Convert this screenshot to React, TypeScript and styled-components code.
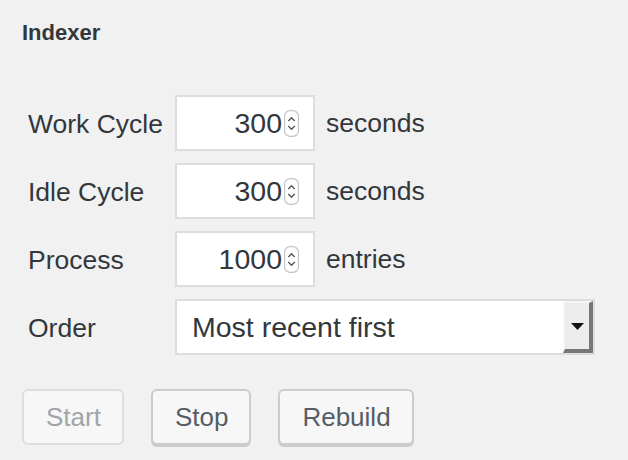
import React from 'react';
import styled, { createGlobalStyle } from 'styled-components';

const GlobalStyle = createGlobalStyle`
  html, body {
    margin: 0;
    padding: 0;
    background: #f1f1f1;
  }
  body {
    font-family: 'Liberation Sans', Arial, sans-serif;
    color: #32373c;
  }
`;

const Page = styled.div`
  width: 628px;
  height: 460px;
  box-sizing: border-box;
  padding: 20px 22px;
  background: #f1f1f1;
`;

const Title = styled.h2`
  margin: 0;
  font-size: 22px;
  line-height: 26px;
  font-weight: bold;
  color: #32373c;
`;

const Form = styled.div`
  display: grid;
  grid-template-columns: 147px auto;
  row-gap: 12px;
  margin-top: 49px;
  padding-left: 6px;
`;

const Label = styled.label`
  align-self: center;
  padding-top: 3px;
  font-size: 26.5px;
  color: #32373c;
`;

const Control = styled.div`
  display: flex;
  align-items: center;
  gap: 11px;
`;

const Unit = styled.span`
  font-size: 26.5px;
  color: #32373c;
`;

const NumberBox = styled.div`
  display: flex;
  align-items: center;
  width: 140px;
  height: 56px;
  box-sizing: border-box;
  padding-right: 14px;
  border: 2px solid #dddddd;
  background: #fff;
`;

const NumberValue = styled.input`
  flex: 1;
  min-width: 0;
  border: none;
  outline: none;
  background: transparent;
  padding: 0 2px 0 0;
  text-align: right;
  font-family: 'Liberation Sans', Arial, sans-serif;
  font-size: 28.5px;
  color: #32373c;
`;

const SelectBox = styled.div`
  display: flex;
  align-items: stretch;
  width: 420px;
  height: 56px;
  box-sizing: border-box;
  border: 2px solid #dddddd;
  background: #fff;
`;

const SelectValue = styled.span`
  flex: 1;
  display: flex;
  align-items: center;
  padding-left: 15px;
  font-size: 28.5px;
  color: #32373c;
`;

const SelectArrow = styled.span`
  display: flex;
  align-items: center;
  justify-content: center;
  width: 30px;
  box-sizing: border-box;
  background: #ececec;
  border-top: 2px solid #f7f7f7;
  border-left: 2px solid #f7f7f7;
  border-right: 4px solid #777;
  border-bottom: 4px solid #777;
`;

const Actions = styled.div`
  display: flex;
  gap: 27px;
  margin-top: 34px;
`;

const Button = styled.button<{ $disabled?: boolean }>`
  height: 56px;
  box-sizing: border-box;
  padding: 0 21px 0 22px;
  border: 2px solid ${p => (p.$disabled ? '#dddddd' : '#cccccc')};
  border-radius: 6px;
  background: #f7f7f7;
  box-shadow: ${p => (p.$disabled ? 'none' : '0 2px 0 #cccccc')};
  font-family: 'Liberation Sans', Arial, sans-serif;
  font-size: 26px;
  color: ${p => (p.$disabled ? '#a0a5aa' : '#555d66')};
  cursor: ${p => (p.$disabled ? 'default' : 'pointer')};
`;

const Spinner = () => (
  <svg width="15" height="27" viewBox="0 0 15 27">
    <rect x="0.6" y="0.6" width="13.8" height="25.8" rx="5.5" fill="#fff" stroke="#c4c4c4" strokeWidth="1.2" />
    <path d="M4.3 11 L7.5 7.8 L10.7 11" fill="none" stroke="#555" strokeWidth="1.4" />
    <path d="M4.3 16 L7.5 19.2 L10.7 16" fill="none" stroke="#555" strokeWidth="1.4" />
  </svg>
);

const NumberField = ({ value }: { value: number }) => (
  <NumberBox>
    <NumberValue type="text" defaultValue={String(value)} />
    <Spinner />
  </NumberBox>
);

const rows = [
  { label: 'Work Cycle', value: 300, unit: 'seconds' },
  { label: 'Idle Cycle', value: 300, unit: 'seconds' },
  { label: 'Process', value: 1000, unit: 'entries' },
];

export default function App() {
  return (
    <>
      <GlobalStyle />
      <Page>
        <Title>Indexer</Title>
        <Form>
          {rows.map(r => (
            <React.Fragment key={r.label}>
              <Label>{r.label}</Label>
              <Control>
                <NumberField value={r.value} />
                <Unit>{r.unit}</Unit>
              </Control>
            </React.Fragment>
          ))}
          <Label>Order</Label>
          <Control>
            <SelectBox>
              <SelectValue>Most recent first</SelectValue>
              <SelectArrow>
                <svg width="13" height="7" viewBox="0 0 13 7">
                  <polygon points="0,0 13,0 6.5,7" fill="#111" />
                </svg>
              </SelectArrow>
            </SelectBox>
          </Control>
        </Form>
        <Actions>
          <Button $disabled>Start</Button>
          <Button>Stop</Button>
          <Button>Rebuild</Button>
        </Actions>
      </Page>
    </>
  );
}
